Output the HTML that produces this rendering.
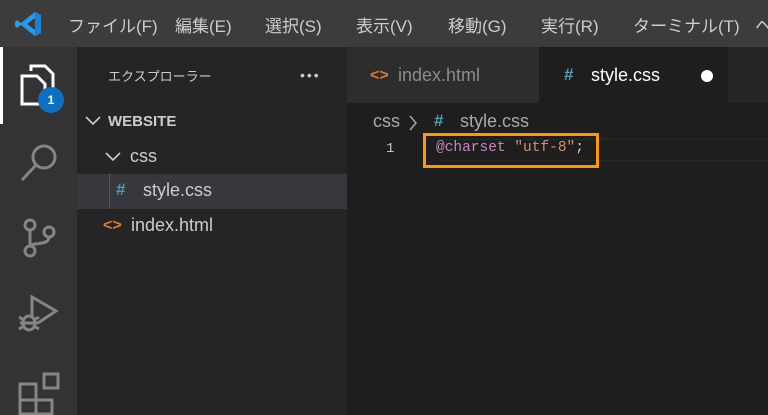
<!DOCTYPE html>
<html><head><meta charset="utf-8"><style>
*{margin:0;padding:0;box-sizing:border-box}
body{width:768px;height:415px;overflow:hidden;background:#1e1e1e;font-family:"Liberation Sans","Noto Sans CJK JP",sans-serif;position:relative}
.a{position:absolute;white-space:nowrap}
.menu{color:#ccc;font-size:17px;top:12px}
.mono{font-family:"Liberation Mono","DejaVu Sans Mono",monospace}
</style></head><body>
<div class="a" style="left:0;top:0;width:768px;height:47px;background:#3c3c3c"></div>
<svg class="a" style="left:15px;top:10px" width="28" height="28" viewBox="0 0 28 28"><path d="M20 2 L26 5 V23 L20 26 L6 15 L2 18 L0 16 V12 L2 10 L6 13 Z M20 8 L12 14 L20 20Z" fill="#2a9ae8" fill-rule="evenodd"/><path d="M20 2 L26 5 V23 L20 26Z" fill="#1f7fd0"/></svg>
<div class="a menu" style="left:68px">ファイル(F)</div>
<div class="a menu" style="left:175px">編集(E)</div>
<div class="a menu" style="left:265px">選択(S)</div>
<div class="a menu" style="left:356px">表示(V)</div>
<div class="a menu" style="left:448px">移動(G)</div>
<div class="a menu" style="left:541px">実行(R)</div>
<div class="a menu" style="left:633px">ターミナル(T)</div>
<div class="a menu" style="left:755px">ヘ</div>

<div class="a" style="left:0;top:47px;width:77px;height:368px;background:#333"></div>
<div class="a" style="left:0;top:47px;width:3px;height:77px;background:#fff"></div>
<svg class="a" style="left:18px;top:62px" width="42" height="48" viewBox="0 0 42 48" fill="none" stroke="#fff" stroke-width="3"><path d="M13 9 V4 H27 L35 12 V32 H27"/><path d="M4 14 H19 L27 22 V42 H4 Z"/></svg>
<div class="a" style="left:38px;top:87px;width:26px;height:26px;border-radius:50%;background:#0e70c0;color:#fff;font-size:12px;font-weight:bold;text-align:center;line-height:26px">1</div>
<svg class="a" style="left:18px;top:140px" width="44" height="44" viewBox="0 0 44 44" fill="none" stroke="#858585" stroke-width="3"><circle cx="26" cy="17" r="11"/><path d="M18 25 L4 40"/></svg>
<svg class="a" style="left:18px;top:218px" width="40" height="40" viewBox="0 0 40 40" fill="none" stroke="#858585" stroke-width="3"><circle cx="12" cy="7" r="5"/><circle cx="12" cy="33" r="5"/><circle cx="31" cy="14" r="5"/><path d="M12 12 V28 M31 19 C31 28 14 24 12 28"/></svg>
<svg class="a" style="left:16px;top:295px" width="44" height="42" viewBox="0 0 44 42" fill="none" stroke="#858585" stroke-width="3"><path d="M16 23 V2 L40 16 L22 28"/><ellipse cx="13" cy="28" rx="6" ry="7"/><path d="M3 22 L8 25 M3 34 L8 31 M23 22 L18 25 M23 34 L18 31 M4 28 H22"/></svg>
<svg class="a" style="left:18px;top:372px" width="42" height="43" viewBox="0 0 42 43" fill="none" stroke="#858585" stroke-width="3"><rect x="2" y="12" width="16" height="16"/><rect x="2" y="28" width="16" height="14"/><rect x="18" y="28" width="16" height="14"/><rect x="26" y="2" width="14" height="14"/></svg>

<div class="a" style="left:77px;top:47px;width:270px;height:368px;background:#252526"></div>
<div class="a" style="left:108px;top:66px;color:#ccc;font-size:13px">エクスプローラー</div>
<div class="a" style="left:300px;top:67px;color:#ccc;font-size:14px;letter-spacing:2px">•••</div>
<svg class="a" style="left:85px;top:116px" width="16" height="10"><path d="M1 1 L8 8 L15 1" stroke="#ccc" stroke-width="1.6" fill="none"/></svg>
<div class="a" style="left:108px;top:113px;color:#ccc;font-size:15px;font-weight:bold">WEBSITE</div>
<svg class="a" style="left:105px;top:152px" width="16" height="10"><path d="M1 1 L8 8 L15 1" stroke="#ccc" stroke-width="1.6" fill="none"/></svg>
<div class="a" style="left:130px;top:146px;color:#ccc;font-size:18px">css</div>
<div class="a" style="left:77px;top:174px;width:270px;height:35px;background:#37373d"></div>
<div class="a" style="left:109px;top:174px;width:1px;height:35px;background:#585858"></div>
<div class="a" style="left:116px;top:180px;color:#519aba;font-size:17px;font-weight:bold">#</div>
<div class="a" style="left:143px;top:180px;color:#ccc;font-size:18px">style.css</div>
<div class="a" style="left:103px;top:217px;color:#e37933;font-size:16px;font-weight:bold">&lt;&gt;</div>
<div class="a" style="left:131px;top:215px;color:#ccc;font-size:18px">index.html</div>

<div class="a" style="left:347px;top:47px;width:421px;height:56px;background:#252526"></div>
<div class="a" style="left:347px;top:47px;width:192px;height:56px;background:#2d2d2d"></div>
<div class="a" style="left:539px;top:47px;width:189px;height:56px;background:#1e1e1e"></div>
<div class="a" style="left:370px;top:67px;color:#e37933;font-size:16px;font-weight:bold">&lt;&gt;</div>
<div class="a" style="left:398px;top:65px;color:#8c8c8c;font-size:18px">index.html</div>
<div class="a" style="left:564px;top:65px;color:#519aba;font-size:17px;font-weight:bold">#</div>
<div class="a" style="left:591px;top:65px;color:#fff;font-size:18px">style.css</div>
<div class="a" style="left:701px;top:70px;width:12px;height:12px;border-radius:50%;background:#fff"></div>

<div class="a" style="left:373px;top:111px;color:#a9a9a9;font-size:18px">css</div>
<svg class="a" style="left:408px;top:115px" width="10" height="16"><path d="M2 1 L8 8 L2 15" stroke="#a9a9a9" stroke-width="1.5" fill="none"/></svg>
<div class="a" style="left:434px;top:111px;color:#519aba;font-size:17px;font-weight:bold">#</div>
<div class="a" style="left:460px;top:111px;color:#a9a9a9;font-size:18px">style.css</div>
<div class="a" style="left:436px;top:139px;width:332px;height:22px;border-top:1px solid #282828;border-bottom:1px solid #282828"></div>
<div class="a mono" style="left:386px;top:141px;color:#c6c6c6;font-size:14px">1</div>
<div class="a mono" style="left:436px;top:140px;font-size:14.5px"><span style="color:#c586c0">@charset</span> <span style="color:#ce9178">"utf-8"</span><span style="color:#d4d4d4">;</span></div>
<div class="a" style="left:423px;top:133px;width:176px;height:35px;border:3px solid #f90"></div>
</body></html>
